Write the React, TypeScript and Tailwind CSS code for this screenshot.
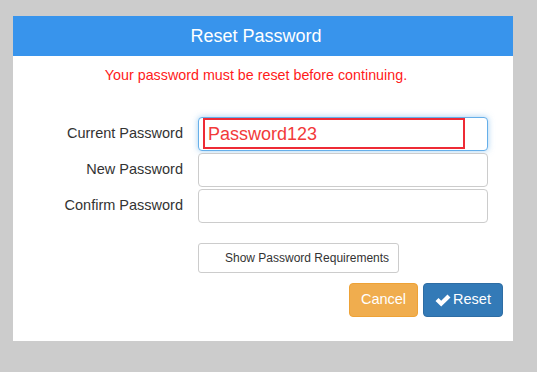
import React from "react";

const font = { fontFamily: '"Liberation Sans", Arial, sans-serif' };

export default function App() {
  return (
    <div className="w-[537px] h-[372px] bg-[#cccccc] pt-[16px] pl-[13px]" style={font}>
      <div className="w-[500px] h-[325px] bg-white flex flex-col">
        <div className="h-[40px] bg-[#3894ec] flex items-center justify-center pr-[14px] text-white text-[18px] leading-none">
          Reset Password
        </div>
        <div className="mt-[9px] pr-[14px] text-center text-[14.3px] leading-[20px] text-[#ff1a1a]">
          Your password must be reset before continuing.
        </div>
        <div className="mt-[32px] grid grid-cols-[170px_290px] gap-x-[15px] gap-y-[2px] items-center">
          <div className="text-right text-[14.5px] text-[#333333]">Current Password</div>
          <div className="h-[34px] rounded-[4px] border border-[#66afe9] shadow-[0_0_6px_rgba(102,175,233,0.6)] bg-white flex items-start">
            <div className="ml-[4px] w-[262px] h-[31px] border-2 border-[#ee2b35] flex items-center pl-[3px] text-[18px] text-[#f23a3a] leading-none">
              Password123
            </div>
          </div>
          <div className="text-right text-[14.5px] text-[#333333]">New Password</div>
          <div className="h-[34px] rounded-[4px] border border-[#cccccc] bg-white" />
          <div className="text-right text-[14.5px] text-[#333333]">Confirm Password</div>
          <div className="h-[34px] rounded-[4px] border border-[#cccccc] bg-white" />
        </div>
        <div className="mt-[20px] pl-[185px]">
          <div className="w-[201px] h-[30px] rounded-[3px] border border-[#cccccc] bg-white flex items-center pl-[26px] text-[12px] text-[#333333]">
            Show Password Requirements
          </div>
        </div>
        <div className="mt-[10px] flex justify-end gap-[5px] pr-[10px]">
          <div className="w-[69px] h-[34px] rounded-[4px] bg-[#f0ad4e] border border-[#eea236] flex items-center justify-center text-white text-[14.5px]">
            Cancel
          </div>
          <div className="w-[80px] h-[34px] rounded-[4px] bg-[#337ab7] border border-[#2e6da4] flex items-center justify-center gap-[2px] text-white text-[14.5px]">
            <svg width="16" height="13" viewBox="0 0 16 13">
              <path d="M0.5 7 L3.5 4 L6.2 6.7 L12.5 0.5 L15.5 3.5 L6.2 12.5 Z" fill="white" />
            </svg>
            <span>Reset</span>
          </div>
        </div>
      </div>
    </div>
  );
}
